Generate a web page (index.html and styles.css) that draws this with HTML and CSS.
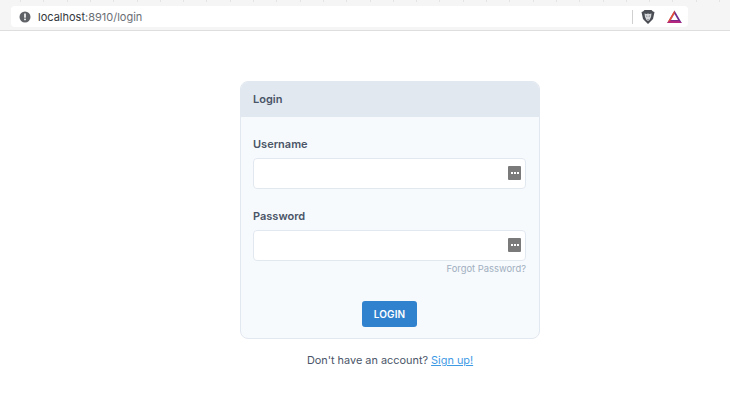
FILE: index.html
```html
<!DOCTYPE html>
<html lang="en">
<head>
    <meta charset="UTF-8">
    <title>Login</title>
    <link rel="stylesheet" href="styles.css">
</head>
<body>
    <div class="toolbar">
        <div class="address-bar">
            <svg class="info-icon" width="12" height="12" viewBox="0 0 12 12">
                <circle cx="6" cy="6" r="5.5" fill="#5f6368"/>
                <rect x="5.2" y="2.5" width="1.6" height="4.2" fill="#fff"/>
                <rect x="5.2" y="7.6" width="1.6" height="1.6" fill="#fff"/>
            </svg>
            <span class="url"><span class="host">localhost</span>:8910/login</span>
            <span class="bar-divider"></span>
            <svg class="brave-icon" width="14" height="16" viewBox="0 0 14 16">
                <path d="M3.5 1 L10.500 1 L12 2.500 L13.500 3 L12 10 L7 15 L2 10 L0.500 3 L2 2.500 Z" fill="#4a4e54"/>
                <path d="M3.500 4.500 L5.500 5 L7 4.500 L8.500 5 L10.500 4.500 L10 8 L8.500 11 L7 12 L5.500 11 L4 8 Z" fill="#d6d7da"/>
                <path d="M5 6.500 L6.300 7 L6 8 Z M9 6.500 L7.700 7 L8 8 Z M6.200 10 L7.800 10 L7 11 Z" fill="#4a4e54"/>
            </svg>
            <svg class="bat-icon" width="15" height="14" viewBox="0 0 15 14">
                <path d="M7.500 0.500 L14.800 13 L0.200 13 Z" fill="#6f2a8c"/>
                <path d="M7.500 0.500 L0.200 13 L3.300 10.700 L7.500 4 Z" fill="#f0512f"/>
                <path d="M0.200 13 L14.800 13 L11.700 10.700 L3.300 10.700 Z" fill="#b5267e"/>
                <path d="M7.500 4 L11 10 L4 10 Z" fill="#fff"/>
            </svg>
        </div>
    </div>

    <main class="page">
        <div class="card">
            <div class="card-header">Login</div>
            <form class="card-body">
                <label class="field-label" for="username">Username</label>
                <div class="input-box">
                    <input id="username" type="text">
                    <span class="key-btn"><i></i><i></i><i></i></span>
                </div>
                <label class="field-label password-label" for="password">Password</label>
                <div class="input-box">
                    <input id="password" type="password">
                    <span class="key-btn"><i></i><i></i><i></i></span>
                </div>
                <a class="forgot" href="#">Forgot Password?</a>
                <div class="actions">
                    <button type="button" class="login-btn">LOGIN</button>
                </div>
            </form>
        </div>
        <p class="signup">Don't have an account? <a href="#">Sign up!</a></p>
    </main>
</body>
</html>
```

FILE: styles.css
```css
* {
    box-sizing: border-box;
}
body {
    margin: 0;
    background-color: #fff;
    font-family: Inter, "Liberation Sans", sans-serif;
    color: #4a5568;
}
.toolbar {
    height: 31px;
    padding: 5px 42px 4px 11px;
    /* little tab-strip ticks along the top edge */
    background: repeating-linear-gradient(90deg, #e4e4e4 0, #e4e4e4 1px, transparent 1px, transparent 23.3px) 20px 0 / 100% 2px no-repeat, #f5f5f5;
    border-bottom: 1px solid #dedede;
}
.address-bar {
    height: 21px;
    margin-top: 1px;
    display: flex;
    align-items: center;
    padding: 0 6px 0 8px;
    background-color: #fff;
    border-radius: 4px;
}
.info-icon {
    margin-right: 7px;
}
.url {
    font-size: 11px;
    color: #6b6f75;
}
.host {
    color: #33373c;
}
.bar-divider {
    width: 1px;
    height: 14px;
    margin-left: auto;
    margin-right: 8px;
    background-color: #d0d0d0;
}
.brave-icon {
    margin-right: 12px;
}
.page {
    display: flex;
    flex-direction: column;
    align-items: center;
    padding: 50px 0 0 50px;
}
.card {
    width: 300px;
    background-color: #f7fafc;
    border: 1px solid #e2e8f0;
    border-radius: 8px;
    overflow: hidden;
}
.card-header {
    height: 35px;
    padding: 0 12px;
    line-height: 35px;
    font-size: 11px;
    font-weight: 600;
    background-color: #e2e8f0;
}
.card-body {
    display: flex;
    flex-direction: column;
    padding: 19px 13px 11px 12px;
}
.field-label {
    font-size: 11px;
    font-weight: 600;
    line-height: 16px;
    margin-bottom: 6px;
}
.password-label {
    margin-top: 19px;
}
.input-box {
    position: relative;
    height: 31px;
    background-color: #fff;
    border: 1px solid #e2e8f0;
    border-radius: 4px;
}
.input-box input {
    width: 100%;
    height: 100%;
    border: none;
    outline: none;
    background: none;
}
.key-btn {
    position: absolute;
    top: 7px;
    right: 4px;
    width: 13px;
    height: 14px;
    display: flex;
    align-items: center;
    justify-content: center;
    gap: 1px;
    background-color: #7a7a7a;
    border-radius: 1px;
}
.key-btn i {
    width: 2px;
    height: 2px;
    background-color: #fff;
}
.forgot {
    align-self: flex-end;
    margin-top: 2px;
    font-size: 9.4px;
    line-height: 12px;
    color: #a0aec0;
    text-decoration: none;
}
.actions {
    display: flex;
    justify-content: center;
    margin-top: 26px;
}
.login-btn {
    width: 55px;
    height: 26px;
    padding: 0 0 1px;
    border: none;
    border-radius: 3px;
    background-color: #3182ce;
    color: #fff;
    font-family: inherit;
    font-size: 10px;
    font-weight: 600;
    letter-spacing: 0.1px;
}
.signup {
    margin: 13px 0 0;
    font-size: 10.9px;
    line-height: 16px;
}
.signup a {
    color: #3f9ae6;
}
```
